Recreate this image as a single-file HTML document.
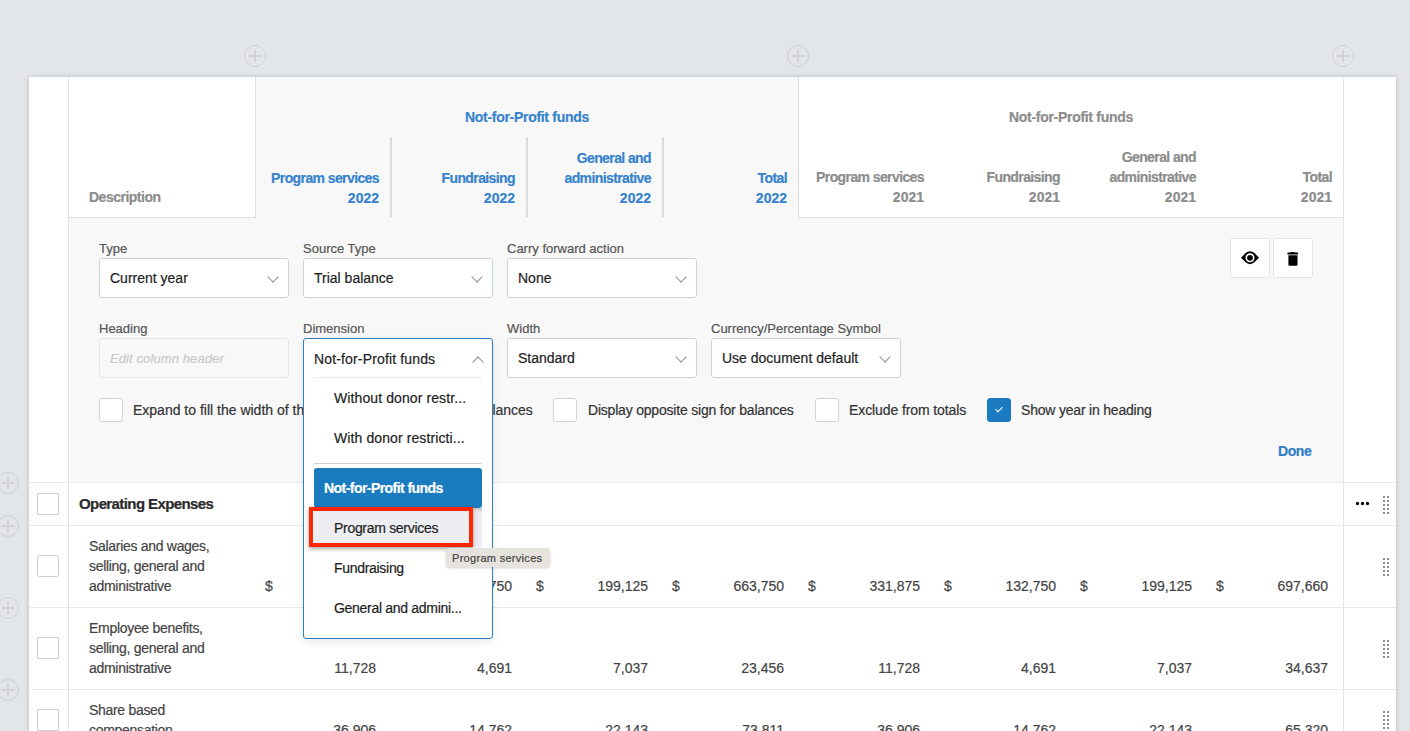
<!DOCTYPE html>
<html><head><meta charset="utf-8">
<style>
html,body{margin:0;padding:0;}
body{width:1410px;height:731px;overflow:hidden;position:relative;background:#e3e6e9;font-family:"Liberation Sans",sans-serif;color:#333;-webkit-text-stroke:0.2px currentColor;}
.a{position:absolute;}
.t{position:absolute;white-space:nowrap;line-height:20px;font-size:14px;}
.r{text-align:right;}
.b{font-weight:bold;}
.hb{color:#3583cc;font-weight:bold;letter-spacing:-0.6px;}
.hg{color:#8c8c8c;font-weight:bold;letter-spacing:-0.6px;}
.plus{position:absolute;width:22px;height:22px;border:1px solid #cfd1d3;border-radius:50%;box-sizing:border-box;}
.plus:before{content:"";position:absolute;left:4px;top:9px;width:12px;height:2px;background:#d0d2d4;}
.plus:after{content:"";position:absolute;left:9px;top:4px;width:2px;height:12px;background:#d0d2d4;}
.lbl{position:absolute;white-space:nowrap;font-size:13px;line-height:20px;color:#555;}
.sel{position:absolute;width:190px;height:40px;box-sizing:border-box;border:1px solid #c9d1d9;border-radius:3px;background:#fff;}
.sel .v{position:absolute;left:10px;top:9px;font-size:14px;line-height:20px;color:#1e1e1e;white-space:nowrap;}
.chev{position:absolute;width:7px;height:7px;border-right:1px solid #909090;border-bottom:1px solid #909090;transform:rotate(45deg);}
.cb{position:absolute;width:24px;height:24px;box-sizing:border-box;border:1px solid #cdd3d9;border-radius:3px;background:#fff;}
.rcb{position:absolute;width:22px;height:22px;box-sizing:border-box;border:1px solid #cfcfcf;border-radius:2px;background:#fff;}
.hl{position:absolute;height:1px;background:#ebebeb;left:29px;width:1367px;}
.num{position:absolute;white-space:nowrap;font-size:14px;line-height:20px;color:#444;text-align:right;}
.dol{position:absolute;white-space:nowrap;font-size:14px;line-height:20px;color:#444;}
.desc{position:absolute;white-space:nowrap;font-size:14px;line-height:20px;color:#444;letter-spacing:-0.3px;}
.grip{position:absolute;width:6px;height:18px;background-image:radial-gradient(circle at 1px 1px,#8a8a8a 1px,transparent 1.1px);}
</style></head><body>

<!-- top plus circles -->
<div class="plus" style="left:244px;top:45px"></div>
<div class="plus" style="left:787px;top:45px"></div>
<div class="plus" style="left:1332px;top:45px"></div>

<!-- card -->
<div class="a" style="left:29px;top:77px;width:1367px;height:700px;background:#fff;box-shadow:0 0 5px rgba(0,0,0,0.18);"></div>


<!-- gutter lines -->
<div class="a" style="left:68px;top:77px;width:1px;height:660px;background:#e4e4e4"></div>
<div class="a" style="left:1343px;top:77px;width:1px;height:660px;background:#e4e4e4"></div>

<!-- header: description cell -->
<div class="a" style="left:255px;top:77px;width:1px;height:141px;background:#dedede"></div>
<div class="a" style="left:69px;top:217px;width:187px;height:1px;background:#dedede"></div>
<div class="t hg" style="left:89px;top:187px;letter-spacing:-0.5px">Description</div>

<!-- 2022 group (selected) -->
<div class="a" style="left:256px;top:77px;width:542px;height:141px;background:#f8f8f8"></div>
<div class="a" style="left:390px;top:137px;width:2px;height:80px;background:#dcdcdc"></div>
<div class="a" style="left:526px;top:137px;width:2px;height:80px;background:#dcdcdc"></div>
<div class="a" style="left:662px;top:137px;width:2px;height:80px;background:#dcdcdc"></div>
<div class="t hb" style="left:256px;width:542px;top:107px;text-align:center;letter-spacing:-0.3px">Not-for-Profit funds</div>
<div class="t hb r" style="right:1031px;top:168px">Program services<br><span style="letter-spacing:0">2022</span></div>
<div class="t hb r" style="right:895px;top:168px">Fundraising<br><span style="letter-spacing:0">2022</span></div>
<div class="t hb r" style="right:759px;top:148px">General and<br>administrative<br><span style="letter-spacing:0">2022</span></div>
<div class="t hb r" style="right:623px;top:168px">Total<br><span style="letter-spacing:0">2022</span></div>

<!-- 2021 group -->
<div class="a" style="left:798px;top:77px;width:1px;height:141px;background:#dedede"></div>
<div class="a" style="left:798px;top:217px;width:545px;height:1px;background:#dedede"></div>
<div class="t hg" style="left:799px;width:544px;top:107px;text-align:center;letter-spacing:-0.3px">Not-for-Profit funds</div>
<div class="t hg r" style="right:486px;top:167px">Program services<br><span style="letter-spacing:0">2021</span></div>
<div class="t hg r" style="right:350px;top:167px">Fundraising<br><span style="letter-spacing:0">2021</span></div>
<div class="t hg r" style="right:214px;top:147px">General and<br>administrative<br><span style="letter-spacing:0">2021</span></div>
<div class="t hg r" style="right:78px;top:167px">Total<br><span style="letter-spacing:0">2021</span></div>

<!-- editor panel -->
<div class="a" style="left:69px;top:218px;width:1274px;height:264px;background:#f8f8f8"></div>


<!-- form row 1 -->
<div class="lbl" style="left:99px;top:239px">Type</div>
<div class="lbl" style="left:303px;top:239px">Source Type</div>
<div class="lbl" style="left:507px;top:239px">Carry forward action</div>
<div class="sel" style="left:99px;top:258px"><div class="v">Current year</div><div class="chev" style="left:169px;top:14px"></div></div>
<div class="sel" style="left:303px;top:258px"><div class="v">Trial balance</div><div class="chev" style="left:169px;top:14px"></div></div>
<div class="sel" style="left:507px;top:258px"><div class="v">None</div><div class="chev" style="left:169px;top:14px"></div></div>

<!-- eye / trash buttons -->
<div class="a" style="left:1230px;top:238px;width:40px;height:40px;box-sizing:border-box;border:1px solid #e4e4e4;border-radius:3px;background:#fff"></div>
<div class="a" style="left:1273px;top:238px;width:40px;height:40px;box-sizing:border-box;border:1px solid #e4e4e4;border-radius:3px;background:#fff"></div>
<svg class="a" style="left:1241px;top:251px" width="18" height="14" viewBox="0 0 18 14"><path d="M0 6.7 L4.3 2.3 Q9 -2 13.7 2.3 L18 6.7 L13.7 11.1 Q9 15.4 4.3 11.1 Z" fill="#000"/><circle cx="9" cy="6.8" r="4.5" fill="#fff"/><circle cx="9" cy="6.8" r="2.9" fill="#000"/></svg>
<svg class="a" style="left:1287px;top:252px" width="12" height="14" viewBox="0 0 12 14"><rect x="0.5" y="0.5" width="10.6" height="2" fill="#000"/><rect x="3.8" y="0" width="4" height="1" fill="#000"/><path d="M1.4 3.2 L10.5 3.2 L10.5 12.5 Q10.5 13.7 9.3 13.7 L2.6 13.7 Q1.4 13.7 1.4 12.5 Z" fill="#000"/></svg>

<!-- form row 2 -->
<div class="lbl" style="left:99px;top:319px">Heading</div>
<div class="lbl" style="left:303px;top:319px">Dimension</div>
<div class="lbl" style="left:507px;top:319px">Width</div>
<div class="lbl" style="left:711px;top:319px">Currency/Percentage Symbol</div>
<div class="a" style="left:99px;top:338px;width:190px;height:40px;box-sizing:border-box;border:1px solid #e3e7eb;border-radius:3px;background:#f8f8f8"></div>
<div class="t" style="left:110px;top:349px;font-size:13px;font-style:italic;color:#c9c9c9;letter-spacing:0.1px">Edit column header</div>
<div class="sel" style="left:507px;top:338px"><div class="v">Standard</div><div class="chev" style="left:169px;top:14px"></div></div>
<div class="sel" style="left:711px;top:338px"><div class="v">Use document default</div><div class="chev" style="left:169px;top:14px"></div></div>

<!-- checkboxes row -->
<div class="cb" style="left:99px;top:398px"></div>
<div class="t" style="left:133px;top:400px;color:#333">Expand to fill the width of the page</div>
<div class="cb" style="left:379px;top:398px"></div>
<div class="t" style="left:413px;top:400px;color:#333">Hide zero balances</div>
<div class="cb" style="left:553px;top:398px"></div>
<div class="t" style="left:588px;top:400px;color:#333;letter-spacing:-0.2px">Display opposite sign for balances</div>
<div class="cb" style="left:815px;top:398px"></div>
<div class="t" style="left:849px;top:400px;color:#333;letter-spacing:-0.1px">Exclude from totals</div>
<div class="cb" style="left:987px;top:398px;background:#1a7bc0;border-color:#1a7bc0"></div>
<div class="a" style="left:997px;top:405px;width:3px;height:6px;border-right:1.7px solid #fff;border-bottom:1.7px solid #fff;transform:rotate(45deg)"></div>
<div class="t" style="left:1021px;top:400px;color:#333;letter-spacing:-0.2px">Show year in heading</div>
<div class="t b" style="left:1278px;top:441px;color:#2f7dc6;font-size:14px;letter-spacing:-0.4px">Done</div>


<!-- table rows -->
<div class="hl" style="top:482px"></div>
<div class="hl" style="top:525px"></div>
<div class="hl" style="top:607px"></div>
<div class="hl" style="top:689px"></div>

<div class="rcb" style="left:37px;top:493px"></div>
<div class="t b" style="left:79px;top:494px;font-size:15px;color:#2a2a2a;letter-spacing:-0.6px">Operating Expenses</div>
<div class="a" style="left:1356px;top:502px;width:3px;height:3px;background:#000;border-radius:0.5px;transform:rotate(20deg)"></div>
<div class="a" style="left:1361px;top:502px;width:3px;height:3px;background:#000;border-radius:0.5px;transform:rotate(20deg)"></div>
<div class="a" style="left:1366px;top:502px;width:3px;height:3px;background:#000;border-radius:0.5px;transform:rotate(20deg)"></div>
<div class="a" style="left:1383px;top:496px;width:2px;height:2px;background:#8d8d8d"></div><div class="a" style="left:1387px;top:496px;width:2px;height:2px;background:#8d8d8d"></div><div class="a" style="left:1383px;top:500px;width:2px;height:2px;background:#8d8d8d"></div><div class="a" style="left:1387px;top:500px;width:2px;height:2px;background:#8d8d8d"></div><div class="a" style="left:1383px;top:504px;width:2px;height:2px;background:#8d8d8d"></div><div class="a" style="left:1387px;top:504px;width:2px;height:2px;background:#8d8d8d"></div><div class="a" style="left:1383px;top:508px;width:2px;height:2px;background:#8d8d8d"></div><div class="a" style="left:1387px;top:508px;width:2px;height:2px;background:#8d8d8d"></div><div class="a" style="left:1383px;top:512px;width:2px;height:2px;background:#8d8d8d"></div><div class="a" style="left:1387px;top:512px;width:2px;height:2px;background:#8d8d8d"></div>

<div class="rcb" style="left:37px;top:555px"></div>
<div class="desc" style="left:89px;top:536px">Salaries and wages,<br>selling, general and<br>administrative</div>
<div class="num" style="right:1034px;top:576.15px">331,875</div>
<div class="dol" style="left:265px;top:576.15px">$</div>
<div class="num" style="right:898px;top:576.15px">132,750</div>
<div class="dol" style="left:400px;top:576.15px">$</div>
<div class="num" style="right:762px;top:576.15px">199,125</div>
<div class="dol" style="left:536px;top:576.15px">$</div>
<div class="num" style="right:626px;top:576.15px">663,750</div>
<div class="dol" style="left:672px;top:576.15px">$</div>
<div class="num" style="right:490px;top:576.15px">331,875</div>
<div class="dol" style="left:808px;top:576.15px">$</div>
<div class="num" style="right:354px;top:576.15px">132,750</div>
<div class="dol" style="left:944px;top:576.15px">$</div>
<div class="num" style="right:218px;top:576.15px">199,125</div>
<div class="dol" style="left:1080px;top:576.15px">$</div>
<div class="num" style="right:82px;top:576.15px">697,660</div>
<div class="dol" style="left:1216px;top:576.15px">$</div>
<div class="a" style="left:1383px;top:558px;width:2px;height:2px;background:#8d8d8d"></div><div class="a" style="left:1387px;top:558px;width:2px;height:2px;background:#8d8d8d"></div><div class="a" style="left:1383px;top:562px;width:2px;height:2px;background:#8d8d8d"></div><div class="a" style="left:1387px;top:562px;width:2px;height:2px;background:#8d8d8d"></div><div class="a" style="left:1383px;top:566px;width:2px;height:2px;background:#8d8d8d"></div><div class="a" style="left:1387px;top:566px;width:2px;height:2px;background:#8d8d8d"></div><div class="a" style="left:1383px;top:570px;width:2px;height:2px;background:#8d8d8d"></div><div class="a" style="left:1387px;top:570px;width:2px;height:2px;background:#8d8d8d"></div><div class="a" style="left:1383px;top:574px;width:2px;height:2px;background:#8d8d8d"></div><div class="a" style="left:1387px;top:574px;width:2px;height:2px;background:#8d8d8d"></div>

<div class="rcb" style="left:37px;top:637px"></div>
<div class="desc" style="left:89px;top:618px">Employee benefits,<br>selling, general and<br>administrative</div>
<div class="num" style="right:1034px;top:658.15px">11,728</div>
<div class="num" style="right:898px;top:658.15px">4,691</div>
<div class="num" style="right:762px;top:658.15px">7,037</div>
<div class="num" style="right:626px;top:658.15px">23,456</div>
<div class="num" style="right:490px;top:658.15px">11,728</div>
<div class="num" style="right:354px;top:658.15px">4,691</div>
<div class="num" style="right:218px;top:658.15px">7,037</div>
<div class="num" style="right:82px;top:658.15px">34,637</div>
<div class="a" style="left:1383px;top:640px;width:2px;height:2px;background:#8d8d8d"></div><div class="a" style="left:1387px;top:640px;width:2px;height:2px;background:#8d8d8d"></div><div class="a" style="left:1383px;top:644px;width:2px;height:2px;background:#8d8d8d"></div><div class="a" style="left:1387px;top:644px;width:2px;height:2px;background:#8d8d8d"></div><div class="a" style="left:1383px;top:648px;width:2px;height:2px;background:#8d8d8d"></div><div class="a" style="left:1387px;top:648px;width:2px;height:2px;background:#8d8d8d"></div><div class="a" style="left:1383px;top:652px;width:2px;height:2px;background:#8d8d8d"></div><div class="a" style="left:1387px;top:652px;width:2px;height:2px;background:#8d8d8d"></div><div class="a" style="left:1383px;top:656px;width:2px;height:2px;background:#8d8d8d"></div><div class="a" style="left:1387px;top:656px;width:2px;height:2px;background:#8d8d8d"></div>

<div class="rcb" style="left:37px;top:709px"></div>
<div class="desc" style="left:89px;top:700px">Share based<br>compensation</div>
<div class="num" style="right:1034px;top:720.15px">36,906</div>
<div class="num" style="right:898px;top:720.15px">14,762</div>
<div class="num" style="right:762px;top:720.15px">22,143</div>
<div class="num" style="right:626px;top:720.15px">73,811</div>
<div class="num" style="right:490px;top:720.15px">36,906</div>
<div class="num" style="right:354px;top:720.15px">14,762</div>
<div class="num" style="right:218px;top:720.15px">22,143</div>
<div class="num" style="right:82px;top:720.15px">65,320</div>
<div class="a" style="left:1383px;top:711px;width:2px;height:2px;background:#8d8d8d"></div><div class="a" style="left:1387px;top:711px;width:2px;height:2px;background:#8d8d8d"></div><div class="a" style="left:1383px;top:715px;width:2px;height:2px;background:#8d8d8d"></div><div class="a" style="left:1387px;top:715px;width:2px;height:2px;background:#8d8d8d"></div><div class="a" style="left:1383px;top:719px;width:2px;height:2px;background:#8d8d8d"></div><div class="a" style="left:1387px;top:719px;width:2px;height:2px;background:#8d8d8d"></div><div class="a" style="left:1383px;top:723px;width:2px;height:2px;background:#8d8d8d"></div><div class="a" style="left:1387px;top:723px;width:2px;height:2px;background:#8d8d8d"></div><div class="a" style="left:1383px;top:727px;width:2px;height:2px;background:#8d8d8d"></div><div class="a" style="left:1387px;top:727px;width:2px;height:2px;background:#8d8d8d"></div>

<!-- left plus circles -->
<div class="plus" style="left:-3px;top:472px"></div>
<div class="plus" style="left:-3px;top:515px"></div>
<div class="plus" style="left:-3px;top:597px"></div>
<div class="plus" style="left:-3px;top:679px"></div>

<!-- dimension dropdown (open) -->
<div class="a" style="left:303px;top:338px;width:190px;height:301px;box-sizing:border-box;border:1px solid #2a80c2;border-radius:3px;background:#fff;box-shadow:0 3px 8px rgba(0,0,0,0.09)"></div>
<div class="t" style="left:314px;top:349px;color:#1e1e1e;letter-spacing:0.15px">Not-for-Profit funds</div>
<div class="chev" style="left:474px;top:358px;transform:rotate(225deg)"></div>
<div class="a" style="left:314px;top:377px;width:168px;height:1px;background:#e9e9e9"></div>
<div class="t" style="left:334px;top:388px;color:#1e1e1e;letter-spacing:0.1px">Without donor restr...</div>
<div class="t" style="left:334px;top:428px;color:#1e1e1e;letter-spacing:0.1px">With donor restricti...</div>
<div class="a" style="left:314px;top:463px;width:168px;height:1px;background:#cfcfcf"></div>
<div class="a" style="left:314px;top:468px;width:168px;height:40px;background:#1a7bbf;border-radius:3px"></div>
<div class="t b" style="left:324px;top:478px;color:#fff;letter-spacing:-0.55px">Not-for-Profit funds</div>
<div class="a" style="left:314px;top:508px;width:168px;height:39px;background:#eceef1;box-shadow:inset 0 4px 3px -2px rgba(0,0,0,0.18)"></div>
<div class="a" style="left:309px;top:507px;width:164px;height:40px;box-sizing:border-box;border:4px solid #ff2600;box-shadow:0 2px 4px rgba(0,0,0,0.35)"></div>
<div class="t" style="left:334px;top:518px;color:#1e1e1e;letter-spacing:-0.3px">Program services</div>
<div class="t" style="left:334px;top:558px;color:#1e1e1e;letter-spacing:-0.3px">Fundraising</div>
<div class="t" style="left:334px;top:598px;color:#1e1e1e;letter-spacing:-0.3px">General and admini...</div>

<!-- tooltip -->
<div class="a" style="left:446px;top:548px;width:104px;height:19px;background:#e6e2de;border-radius:3px;box-shadow:0 1px 3px rgba(0,0,0,0.18)"></div>
<div class="a" style="left:452px;top:551px;font-size:11px;line-height:14px;color:#444;white-space:nowrap;letter-spacing:0.3px">Program services</div>

</body></html>
